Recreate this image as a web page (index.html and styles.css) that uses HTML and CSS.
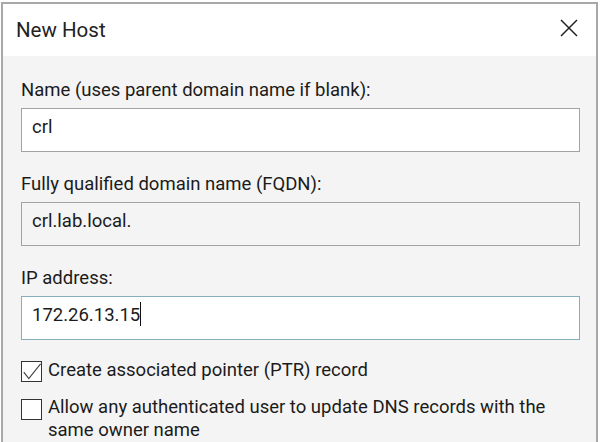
FILE: index.html
```html
<!DOCTYPE html>
<html>
<head>
<meta charset="utf-8">
<link rel="stylesheet" href="styles.css">
</head>
<body>
<div class="window">
  <div class="titlebar">
    <span class="title">New Host</span>
    <svg class="close" width="18" height="18" viewBox="0 0 18 18"><path d="M1 1 L17 17 M17 1 L1 17" stroke="#222" stroke-width="1.5" fill="none"/></svg>
  </div>
  <div class="content">
    <div class="field">
      <div class="label">Name (uses parent domain name if blank):</div>
      <div class="input">crl</div>
    </div>
    <div class="field">
      <div class="label">Fully qualified domain name (FQDN):</div>
      <div class="input readonly">crl.lab.local.</div>
    </div>
    <div class="field">
      <div class="label">IP address:</div>
      <div class="input focused">172.26.13.15<span class="caret"></span></div>
    </div>
    <div class="checks">
      <div class="check">
        <span class="box"><svg width="19" height="19" viewBox="0 0 19 19"><path d="M1.8 10.2 L6.8 16.6 L18.6 1.8" stroke="#444" stroke-width="1.2" fill="none"/></svg></span>
        <span class="ctext">Create associated pointer (PTR) record</span>
      </div>
      <div class="check second">
        <span class="box"></span>
        <span class="ctext">Allow any authenticated user to update DNS records with the same owner name</span>
      </div>
    </div>
  </div>
</div>
</body>
</html>
```

FILE: styles.css
```css
html, body {
  margin: 0;
  padding: 0;
  background: #ffffff;
}
body {
  font-family: Roboto, "Noto Sans", sans-serif;
  color: #1b1b1b;
  overflow: hidden;
  height: 442px;
}
.window {
  margin: 2px 0 0 1px;
  width: 593px;
  height: 460px;
  border: 2px solid #a8a8a8;
  border-bottom: none;
  background: #f4f4f4;
}
.titlebar {
  height: 52px;
  background: #ffffff;
  display: flex;
  align-items: center;
  justify-content: space-between;
  padding: 0 18px 0 13px;
}
.title {
  font-size: 20.5px;
  color: #222;
}
.close {
  margin-top: -4px;
}
.content {
  padding: 22px 16px 0 18px;
  display: flex;
  flex-direction: column;
}
.field {
  display: flex;
  flex-direction: column;
}
.field + .field {
  margin-top: 20px;
}
.label {
  font-size: 18.5px;
  line-height: 24px;
  margin-bottom: 6px;
}
.input {
  height: 42px;
  border: 1px solid #a3a3a3;
  background: #ffffff;
  font-size: 18.5px;
  line-height: 36px;
  padding-left: 10px;
}
.input.readonly {
  background: #f4f4f4;
}
.input.focused {
  border-color: #86aebb;
}
.caret {
  display: inline-block;
  width: 1px;
  height: 24px;
  background: #111;
  vertical-align: -5px;
}
.checks {
  margin-top: 19px;
  display: flex;
  flex-direction: column;
  gap: 14px;
}
.check {
  display: flex;
  align-items: flex-start;
}
.box {
  flex: none;
  width: 19px;
  height: 19px;
  border: 1.5px solid #333;
  background: #ffffff;
  margin-top: 2px;
  margin-right: 6px;
}
.check.second .box {
  margin-top: 3px;
}
.box svg { display: block; }
.ctext {
  font-size: 18.5px;
  line-height: 23px;
}
```
